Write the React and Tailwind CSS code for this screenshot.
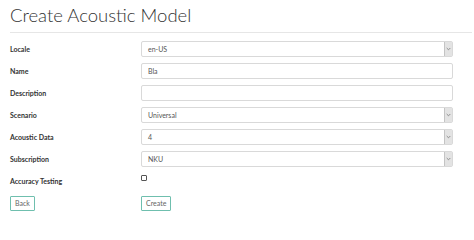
import React from "react";

const Field = ({ label, children }) => (
    <div className="flex items-center h-[16px]">
        <p className="w-[131px] shrink-0 text-[7px] font-bold text-[#333]">{label}</p>
        <div className="flex-1">{children}</div>
    </div>
);

const TextBox = ({ value }) => (
    <div className="h-[16px] border border-[#d9d9d9] rounded-[2px] bg-white px-[6px] flex items-center text-[7px] text-[#555]">
        {value}
    </div>
);

const SelectBox = ({ value }) => (
    <div className="h-[16px] border border-[#d9d9d9] rounded-[2px] bg-white flex items-stretch text-[7px] text-[#555]">
        <span className="flex-1 pl-[6px] flex items-center">{value}</span>
        <span className="w-[8px] bg-[#e3e3e3] border-l border-[#c4c4c4] flex items-center justify-center">
            <svg width="5" height="4" viewBox="0 0 5 4">
                <path d="M0.7 1 L2.5 2.8 L4.3 1" fill="none" stroke="#777" strokeWidth="0.8" />
            </svg>
        </span>
    </div>
);

export default function App() {
    return (
        <div className="w-[474px] h-[223px] bg-white font-['Lato',sans-serif] pl-[10px] pr-[2px] pt-[3px]">
            <h1 className="text-[18.5px] font-light leading-[25px] text-[#333]">Create Acoustic Model</h1>
            <div className="mt-[4px] border-t border-[#e6e6e6]" />

            <div className="mt-[8px] pr-[19px] flex flex-col gap-[6px]">
                <Field label="Locale"><SelectBox value="en-US" /></Field>
                <Field label="Name"><TextBox value="Bla" /></Field>
                <Field label="Description"><TextBox value="" /></Field>
                <Field label="Scenario"><SelectBox value="Universal" /></Field>
                <Field label="Acoustic Data"><SelectBox value="4" /></Field>
                <Field label="Subscription"><SelectBox value="NKU" /></Field>
            </div>

            <div className="mt-[4px] flex items-center h-[16px]">
                <p className="w-[131px] shrink-0 text-[7px] font-bold text-[#333] mt-[4px]">Accuracy Testing</p>
                <span className="w-[6px] h-[6px] border border-[#555] rounded-[1px] bg-white -mt-[3px]" />
            </div>

            <div className="mt-[9px] flex items-center">
                <div className="w-[131px] shrink-0 flex">
                    <button className="h-[15px] px-[4px] border border-[#6fbfae] rounded-[1px] text-[7px] text-[#666] bg-white">Back</button>
                </div>
                <button className="h-[15px] px-[4px] border border-[#6fbfae] rounded-[1px] text-[7px] text-[#666] bg-white">Create</button>
            </div>
        </div>
    );
}
